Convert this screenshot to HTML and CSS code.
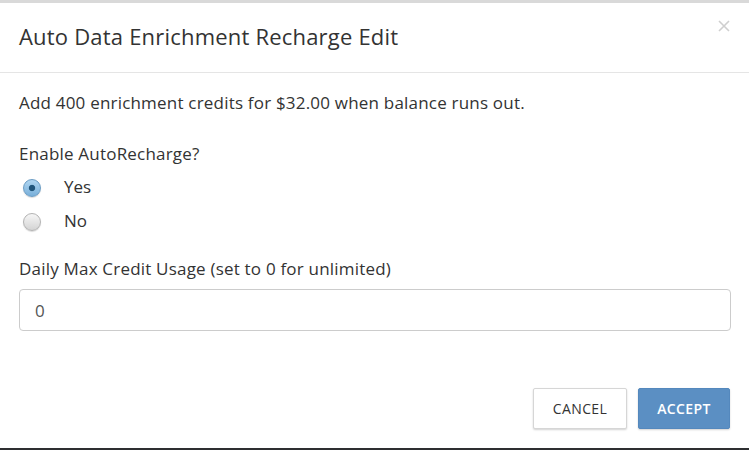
FILE: index.html
```html
<!DOCTYPE html>
<html lang="en">
<head>
<meta charset="utf-8">
<title>Auto Data Enrichment Recharge Edit</title>
<link rel="stylesheet" href="styles.css">
</head>
<body>
<div class="page">
  <div class="topbar"></div>
  <div class="modal">
    <div class="modal-header">
      <h4 class="modal-title">Auto Data Enrichment Recharge Edit</h4>
      <button class="close" type="button" aria-label="Close">
        <svg width="12" height="12" viewBox="0 0 12 12"><path d="M1 1L11 11M11 1L1 11" stroke="#cfcfcf" stroke-width="1.6" fill="none"/></svg>
      </button>
    </div>
    <div class="modal-body">
      <p class="intro">Add 400 enrichment credits for $32.00 when balance runs out.</p>
      <p class="label">Enable AutoRecharge?</p>
      <div class="radios">
        <label class="radio-row"><input type="radio" name="ar" class="radio" checked><span>Yes</span></label>
        <label class="radio-row"><input type="radio" name="ar" class="radio"><span>No</span></label>
      </div>
      <p class="label label-max">Daily Max Credit Usage (set to 0 for unlimited)</p>
      <input class="text-input" type="text" value="0">
    </div>
    <div class="modal-footer">
      <button class="btn btn-default" type="button">CANCEL</button>
      <button class="btn btn-primary" type="button">ACCEPT</button>
    </div>
  </div>
  <div class="bottombar"></div>
</div>
</body>
</html>
```
FILE: styles.css
```css
* { box-sizing: border-box; }
html, body { margin: 0; padding: 0; }
body {
  font-family: "Open Sans", "Noto Sans", sans-serif;
  color: #333;
  background: #fff;
}
.page {
  width: 749px;
  height: 450px;
  display: flex;
  flex-direction: column;
  overflow: hidden;
}
.topbar {
  height: 3px;
  background: #d9d9d9;
  flex: none;
}
.bottombar {
  height: 2px;
  background: #2e2f31;
  flex: none;
}
.modal {
  flex: 1;
  display: flex;
  flex-direction: column;
  background: #fff;
}
.modal-header {
  display: flex;
  justify-content: space-between;
  align-items: flex-start;
  padding: 21px 19px 24px 19px;
  border-bottom: 1px solid #e5e5e5;
}
.modal-title {
  margin: 0;
  font-size: 22px;
  letter-spacing: 0.2px;
  line-height: 24px;
  font-weight: 400;
  color: #333;
}
.close {
  border: 0;
  background: none;
  padding: 0;
  margin-top: -4px;
  width: 12px;
  height: 12px;
  display: flex;
}
.modal-body {
  padding: 19px 19px 0 19px;
  display: flex;
  flex-direction: column;
}
.intro, .label {
  margin: 0;
  font-size: 17px;
  letter-spacing: 0.2px;
  line-height: 22px;
}
.label { margin-top: 29px; }
.radios {
  display: flex;
  flex-direction: column;
  margin-top: 11px;
  gap: 12px;
}
.radio-row {
  display: flex;
  align-items: center;
  font-size: 17px;
  line-height: 22px;
  height: 22px;
}
.radio {
  appearance: none;
  -webkit-appearance: none;
  margin: 1px 23px 0 4px;
  width: 18px;
  height: 18px;
  border-radius: 50%;
  border: 1px solid #b3b3b3;
  background: linear-gradient(#f6f6f6, #d4d4d4);
  box-shadow: 0 1px 1px rgba(0,0,0,0.15);
  flex: none;
}
.radio:checked {
  border-color: #6a9cc4;
  background:
    radial-gradient(circle, #21557b 0 2.6px, #3a6f95 3px, transparent 3.6px),
    linear-gradient(#b0d6f1, #78afd9);
}
.label-max { margin-top: 26px; }
.text-input {
  margin-top: 9px;
  width: 712px;
  height: 42px;
  border: 1px solid #cccccc;
  border-radius: 4px;
  padding: 0 15px;
  font-family: "Open Sans", "Noto Sans", sans-serif;
  font-size: 17px;
  color: #555;
  outline: none;
}
.modal-footer {
  display: flex;
  justify-content: flex-end;
  gap: 11px;
  padding: 57px 19px 0 19px;
}
.btn {
  height: 41px;
  border-radius: 2px;
  font-family: "Open Sans", "Noto Sans", sans-serif;
  font-size: 14px;
  letter-spacing: 0.4px;
  padding: 0;
  box-shadow: 0 1px 2px rgba(0,0,0,0.18);
  cursor: pointer;
}
.btn-default {
  width: 94px;
  background: #fff;
  border: 1px solid #d6d6d6;
  color: #333;
  font-weight: 400;
}
.btn-primary {
  width: 92px;
  background: #5b8fc3;
  border: 1px solid #5488bd;
  color: #fff;
  font-weight: 600;
}
```
